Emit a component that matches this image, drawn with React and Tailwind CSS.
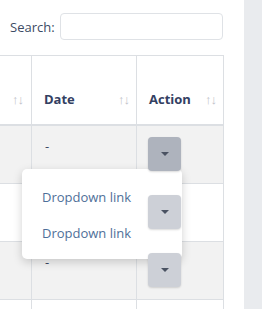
const rows = [
  { date: '-', bg: 'bg-[#f2f2f2]', btn: 'bg-[#aeb3bd]' },
  { date: '', bg: 'bg-white', btn: 'bg-[#cdd0d7]' },
  { date: '-', bg: 'bg-[#f2f2f2]', btn: 'bg-[#cdd0d7]' },
  { date: '', bg: 'bg-white', btn: '' },
]

function Sort() {
  return <span className="text-[13px] tracking-[-1px] text-[#bfc3ca]">↑↓</span>
}

export default function App() {
  return (
    <div className="flex h-[309px] w-[262px] overflow-hidden bg-white font-['Open_Sans',sans-serif] text-[#3c4b64]">
      <div className="relative w-[244px] shrink-0">
        {/* Search */}
        <div className="flex h-[55px] items-start pt-[13px]">
          <label className="ml-[10px] mr-[5px] mt-[5px] text-[13px] text-[#3c4b64]">Search:</label>
          <div className="h-[27px] w-[163px] rounded-[4px] border border-[#dfe2e6] bg-white" />
        </div>

        {/* Table */}
        <div className="w-[224px] border-t border-[#dcdfe3]">
          <div className="flex h-[70px] border-b-2 border-[#dcdfe3]">
            <div className="flex w-[32px] items-end justify-end border-r border-[#dcdfe3] pb-[15px] pr-[8px]">
              <Sort />
            </div>
            <div className="flex w-[105px] items-end justify-between border-r border-[#dcdfe3] pb-[15px] pl-[12px] pr-[7px]">
              <span className="text-[13px] font-bold text-[#334062]">Date</span>
              <Sort />
            </div>
            <div className="flex w-[87px] items-end justify-between border-r border-[#dcdfe3] pb-[15px] pl-[12px] pr-[7px]">
              <span className="text-[13px] font-bold text-[#334062]">Action</span>
              <Sort />
            </div>
          </div>
          {rows.map((r, i) => (
            <div key={i} className={`flex h-[58px] border-b border-[#dcdfe3] ${r.bg}`}>
              <div className="w-[32px] border-r border-[#dcdfe3]" />
              <div className="w-[105px] border-r border-[#dcdfe3] pl-[13px] pt-[11px] text-[13px]">{r.date}</div>
              <div className="w-[87px] border-r border-[#dcdfe3] pl-[11px] pt-[11px]">
                {r.btn && (
                  <div className={`relative z-10 flex h-[34px] w-[33px] items-center justify-center rounded-[4px] shadow-[0_1px_2px_rgba(0,0,0,0.15)] ${r.btn}`}>
                    <span className="h-0 w-0 border-x-[4px] border-t-[4px] border-x-transparent border-t-[#4a5262]" />
                  </div>
                )}
              </div>
            </div>
          ))}
        </div>

        {/* Dropdown menu */}
        <div className="absolute left-[22px] top-[169px] w-[160px] rounded-[5px] bg-white pb-[8px] pt-[10px] shadow-[0_3px_10px_rgba(0,0,0,0.18)]">
          <div className="py-[9px] pl-[20px] text-[13px] leading-[18px] text-[#4f6f99]">Dropdown link</div>
          <div className="py-[9px] pl-[20px] text-[13px] leading-[18px] text-[#4f6f99]">Dropdown link</div>
        </div>
      </div>
      <div className="flex-1 bg-[#e9ebee]" />
    </div>
  )
}
